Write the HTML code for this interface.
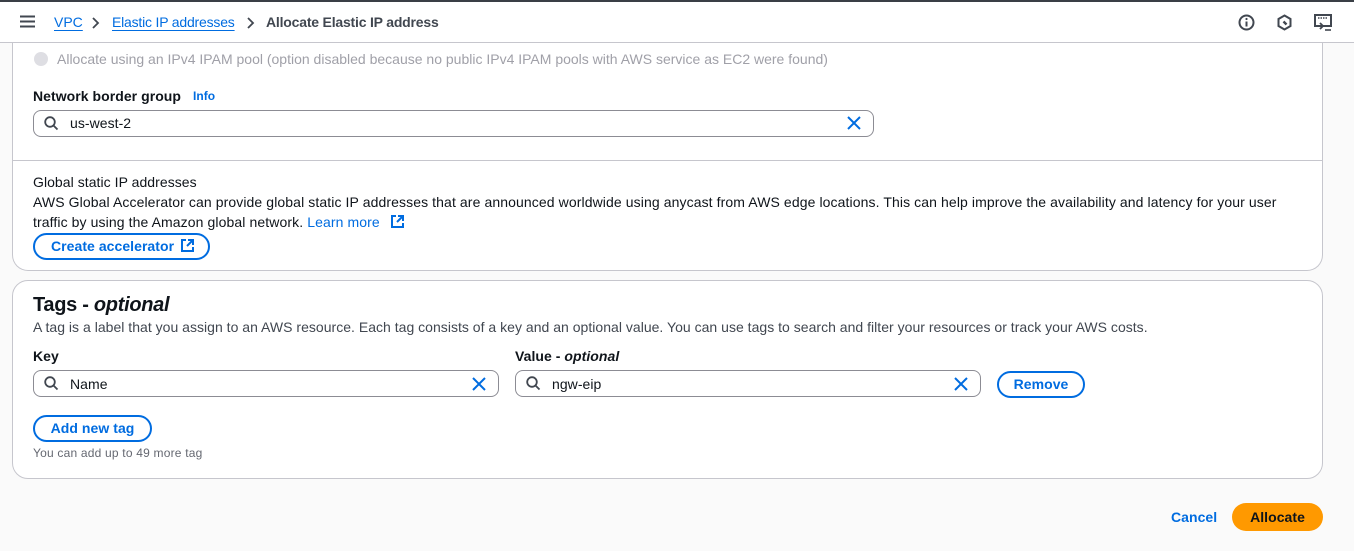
<!DOCTYPE html>
<html><head><meta charset="utf-8"><style>
*{box-sizing:border-box;margin:0;padding:0}
body{width:1354px;height:551px;overflow:hidden;background:#fafafa;font-family:"Liberation Sans",sans-serif;color:#0f141a;font-size:14px;position:relative;letter-spacing:0.05px}
.hdr{position:absolute;left:0;top:0;width:1354px;height:43px;background:#fff;border-top:2px solid #3a3f46;border-bottom:1px solid #c6c6cd;z-index:5;letter-spacing:0}
.abs{position:absolute;white-space:nowrap}
.card{position:absolute;left:12px;width:1311px;background:#fff;border:1px solid #c6c6cd;border-radius:16px}
.lnk{color:#006ce0}
.inp{position:absolute;height:27px;border:1px solid #8c8c94;border-radius:8px;background:#fff}
.btn{position:absolute;height:27px;border:2px solid #006ce0;border-radius:14px;color:#006ce0;font-weight:bold;text-align:center;line-height:23px;font-size:14px;background:#fff}
</style></head><body>
<div class="hdr">
 <svg class="abs" style="left:20px;top:13px" width="15" height="13"><path d="M0 1.5H15M0 6.5H15M0 11.5H15" stroke="#414750" stroke-width="2"/></svg>
 <span class="abs lnk" style="left:54px;top:12px;text-decoration:underline;text-underline-offset:3px">VPC</span>
 <svg class="abs" style="left:92px;top:15px" width="8" height="12"><path d="M1 1l5 5-5 5" stroke="#414750" stroke-width="1.8" fill="none"/></svg>
 <span class="abs lnk" style="left:112px;top:12px;text-decoration:underline;text-underline-offset:3px;letter-spacing:-0.2px">Elastic IP addresses</span>
 <svg class="abs" style="left:247px;top:15px" width="8" height="12"><path d="M1 1l5 5-5 5" stroke="#414750" stroke-width="1.8" fill="none"/></svg>
 <span class="abs" style="left:266px;top:12px;font-weight:bold;color:#414750;letter-spacing:-0.2px">Allocate Elastic IP address</span>
 <svg class="abs" style="left:1238px;top:12px" width="17" height="17"><circle cx="8.5" cy="8.5" r="7" stroke="#414750" stroke-width="2" fill="none"/><path d="M8.5 7.5v5" stroke="#414750" stroke-width="2"/><circle cx="8.5" cy="5" r="1.1" fill="#414750"/></svg>
 <svg class="abs" style="left:1276px;top:12px" width="17" height="17"><path d="M8.5 1.5l6 3.5v7l-6 3.5-6-3.5V5z" stroke="#414750" stroke-width="2" fill="none"/><path d="M7.5 7.5l3 3" stroke="#414750" stroke-width="2.4"/></svg>
 <svg class="abs" style="left:1314px;top:12px" width="18" height="18"><rect x="1" y="1" width="16" height="11" stroke="#414750" stroke-width="2" fill="none"/><path d="M4 4h10" stroke="#414750" stroke-width="1.5" stroke-dasharray="1.5 1"/><path d="M6 9l3 3-3 3" stroke="#414750" stroke-width="1.8" fill="none"/><path d="M11 16h6" stroke="#414750" stroke-width="1.6"/></svg>
</div>
<div class="card" style="top:20px;height:251px;border-top:none;border-top-left-radius:0;border-top-right-radius:0">
 <div style="position:absolute;left:0;right:0;top:140px;border-top:1px solid #c6c6cd"></div>
</div>
<div class="abs" style="left:34px;top:52px;width:14px;height:14px;border-radius:50%;background:#dedee3"></div>
<span class="abs" style="left:57px;top:51px;color:#a0a0a8;letter-spacing:0">Allocate using an IPv4 IPAM pool (option disabled because no public IPv4 IPAM pools with AWS service as EC2 were found)</span>
<span class="abs" style="left:33px;top:88px;font-weight:bold">Network border group</span>
<span class="abs lnk" style="left:193px;top:89px;font-weight:bold;font-size:12px">Info</span>
<div class="inp" style="left:33px;top:110px;width:841px"></div>
<svg class="abs" style="left:44px;top:116px" width="15" height="15"><circle cx="6" cy="6" r="4.8" stroke="#414750" stroke-width="1.8" fill="none"/><path d="M9.5 9.5l4 4" stroke="#414750" stroke-width="1.8"/></svg>
<span class="abs" style="left:70px;top:115px">us-west-2</span>
<svg class="abs" style="left:847px;top:116px" width="14" height="14"><path d="M1 1l12 12M13 1L1 13" stroke="#006ce0" stroke-width="2"/></svg>
<span class="abs" style="left:33px;top:174px">Global static IP addresses</span>
<span class="abs" style="left:33px;top:194px;letter-spacing:0.1px">AWS Global Accelerator can provide global static IP addresses that are announced worldwide using anycast from AWS edge locations. This can help improve the availability and latency for your user</span>
<span class="abs" style="left:33px;top:214px;letter-spacing:0.1px">traffic by using the Amazon global network. <span class="lnk">Learn more</span></span>
<svg class="abs" style="left:390px;top:214px" width="15" height="15"><path d="M6 2H2v11h11V9M8 2h5v5M13 2L7 8" stroke="#006ce0" stroke-width="2" fill="none"/></svg>
<div class="btn" style="left:33px;top:233px;width:177px;text-align:left;padding-left:16px">Create accelerator</div>
<svg class="abs" style="left:180px;top:238px" width="15" height="15"><path d="M6 2H2v11h11V9M8 2h5v5M13 2L7 8" stroke="#006ce0" stroke-width="2" fill="none"/></svg>

<div class="card" style="top:280px;height:199px"></div>
<span class="abs" style="left:33px;top:294px;font-size:20px;font-weight:bold;letter-spacing:-0.3px">Tags - <i>optional</i></span>
<span class="abs" style="left:33px;top:319px;font-size:14px;color:#414750;letter-spacing:0.02px">A tag is a label that you assign to an AWS resource. Each tag consists of a key and an optional value. You can use tags to search and filter your resources or track your AWS costs.</span>
<span class="abs" style="left:33px;top:348px;font-weight:bold">Key</span>
<span class="abs" style="left:515px;top:348px;font-weight:bold">Value - <i>optional</i></span>
<div class="inp" style="left:33px;top:370px;width:466px"></div>
<svg class="abs" style="left:44px;top:376px" width="15" height="15"><circle cx="6" cy="6" r="4.8" stroke="#414750" stroke-width="1.8" fill="none"/><path d="M9.5 9.5l4 4" stroke="#414750" stroke-width="1.8"/></svg>
<span class="abs" style="left:70px;top:376px">Name</span>
<svg class="abs" style="left:472px;top:377px" width="14" height="14"><path d="M1 1l12 12M13 1L1 13" stroke="#006ce0" stroke-width="2"/></svg>
<div class="inp" style="left:515px;top:370px;width:466px"></div>
<svg class="abs" style="left:526px;top:376px" width="15" height="15"><circle cx="6" cy="6" r="4.8" stroke="#414750" stroke-width="1.8" fill="none"/><path d="M9.5 9.5l4 4" stroke="#414750" stroke-width="1.8"/></svg>
<span class="abs" style="left:552px;top:376px">ngw-eip</span>
<svg class="abs" style="left:954px;top:377px" width="14" height="14"><path d="M1 1l12 12M13 1L1 13" stroke="#006ce0" stroke-width="2"/></svg>
<div class="btn" style="left:997px;top:371px;width:88px">Remove</div>
<div class="btn" style="left:33px;top:415px;width:119px">Add new tag</div>
<span class="abs" style="left:33px;top:446px;font-size:12px;color:#656871;letter-spacing:0.2px">You can add up to 49 more tag</span>

<span class="abs lnk" style="left:1171px;top:509px;font-weight:bold">Cancel</span>
<div class="abs" style="left:1232px;top:503px;width:91px;height:28px;border-radius:14px;background:#ff9900;font-weight:bold;text-align:center;line-height:28px;color:#0f141a">Allocate</div>
</body></html>
